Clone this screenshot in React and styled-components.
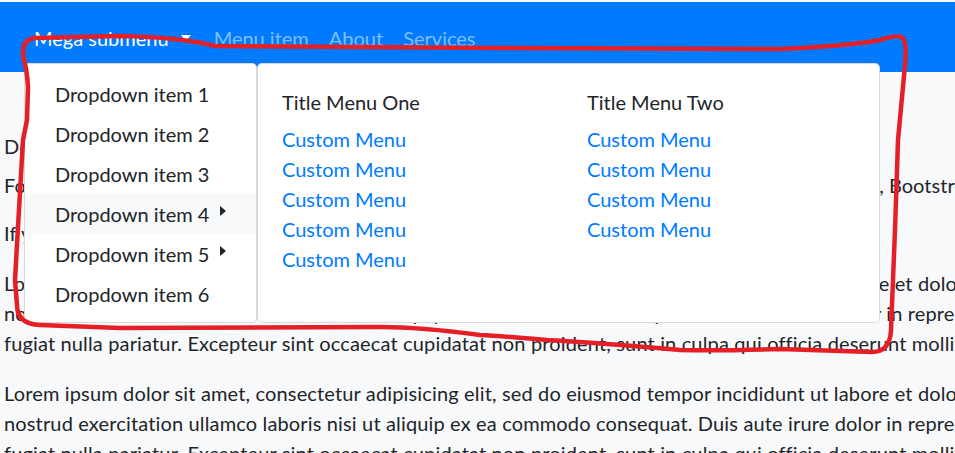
import React from "react";
import styled, { createGlobalStyle } from "styled-components";

const GlobalStyle = createGlobalStyle`
  html, body {
    margin: 0;
    padding: 0;
    background: #f8f9fa;
    overflow: hidden;
  }
  body {
    font-family: "Lato", "Liberation Sans", sans-serif;
    font-size: 20px;
    line-height: 30px;
    color: #212529;
  }
  * { box-sizing: border-box; }
`;

const Page = styled.div`
  position: relative;
  width: 955px;
  height: 453px;
  padding-top: 2px;
  overflow: hidden;
`;

const Navbar = styled.nav`
  position: relative;
  height: 70px;
  background: #007bff;
  display: flex;
  align-items: center;
  padding: 2px 0 0 24px;
`;

const NavLink = styled.a`
  display: flex;
  align-items: center;
  padding: 0 10px;
  color: ${(p) => (p.$active ? "#ffffff" : "rgba(255, 255, 255, 0.5)")};
  text-decoration: none;
  white-space: nowrap;
`;

const DownCaret = styled.span`
  display: inline-block;
  width: 0;
  height: 0;
  margin: 0 3px 0 12px;
  border-top: 6px solid #ffffff;
  border-left: 5.5px solid transparent;
  border-right: 5.5px solid transparent;
`;

const Dropdown = styled.div`
  position: absolute;
  top: 61px;
  left: 24px;
  display: flex;
  z-index: 5;
`;

const ItemMenu = styled.ul`
  list-style: none;
  margin: 0;
  width: 233px;
  height: 260px;
  padding: 9px 0;
  background: #ffffff;
  border: 1px solid rgba(0, 0, 0, 0.15);
  border-radius: 5px;
`;

const Item = styled.li`
  display: flex;
  align-items: center;
  height: 40px;
  padding: 2px 30px 0;
  white-space: nowrap;
  color: #212529;
  background: ${(p) => (p.$hover ? "#f8f9fa" : "transparent")};
`;

const RightCaret = styled.span`
  display: inline-block;
  width: 0;
  height: 0;
  margin: 0 0 7px 11px;
  border-left: 6px solid #212529;
  border-top: 5px solid transparent;
  border-bottom: 5px solid transparent;
`;

const MegaPanel = styled.div`
  width: 623px;
  height: 260px;
  padding: 23px 24px;
  background: #ffffff;
  border: 1px solid rgba(0, 0, 0, 0.15);
  border-radius: 5px;
  display: grid;
  grid-template-columns: 305px 305px;
  align-items: start;
`;

const Column = styled.div`
  display: flex;
  flex-direction: column;
`;

const ColumnTitle = styled.h6`
  margin: 0 0 7px;
  font-size: 20px;
  font-weight: 400;
  line-height: 30px;
  color: #212529;
`;

const MenuLink = styled.a`
  color: #007bff;
  text-decoration: none;
  line-height: 30px;
  white-space: nowrap;
`;

const Content = styled.main`
  padding: 59px 0 0 4px;
`;

const Paragraph = styled.p`
  margin: 0 0 ${(p) => p.$gap}px;
  letter-spacing: ${(p) => (p.$tight ? "0.05px" : "0.15px")};
`;

const Line = styled.span`
  display: block;
  white-space: nowrap;
`;

const Annotation = styled.svg`
  position: absolute;
  top: 0;
  left: 0;
  width: 955px;
  height: 453px;
  pointer-events: none;
  z-index: 10;
`;

const items = [
  { label: "Dropdown item 1" },
  { label: "Dropdown item 2" },
  { label: "Dropdown item 3" },
  { label: "Dropdown item 4", sub: true, hover: true },
  { label: "Dropdown item 5", sub: true },
  { label: "Dropdown item 6" },
];

const columns = [
  { title: "Title Menu One", count: 5 },
  { title: "Title Menu Two", count: 4 },
];

const lorem = [
  "Lorem ipsum dolor sit amet, consectetur adipisicing elit, sed do eiusmod tempor incididunt ut labore et dolore magna aliqua. Ut enim ad minim veniam, quis",
  "nostrud exercitation ullamco laboris nisi ut aliquip ex ea commodo consequat. Duis aute irure dolor in reprehenderit in voluptate velit esse cillum dolore eu",
  "fugiat nulla pariatur. Excepteur sint occaecat cupidatat non proident, sunt in culpa qui officia deserunt mollit anim id est laborum.",
];

export default function App() {
  return (
    <Page>
      <GlobalStyle />
      <Navbar>
        <NavLink $active href="#">
          Mega submenu
          <DownCaret />
        </NavLink>
        <NavLink href="#">Menu item</NavLink>
        <NavLink href="#">About</NavLink>
        <NavLink href="#">Services</NavLink>
        <Dropdown>
          <ItemMenu>
            {items.map((it) => (
              <Item key={it.label} $hover={it.hover}>
                {it.label}
                {it.sub && <RightCaret />}
              </Item>
            ))}
          </ItemMenu>
          <MegaPanel>
            {columns.map((col) => (
              <Column key={col.title}>
                <ColumnTitle>{col.title}</ColumnTitle>
                {Array.from({ length: col.count }).map((_, i) => (
                  <MenuLink key={i} href="#">
                    Custom Menu
                  </MenuLink>
                ))}
              </Column>
            ))}
          </MegaPanel>
        </Dropdown>
      </Navbar>
      <Content>
        <Paragraph $gap={9}>
          <Line>Demo page: Mega submenu in navbar</Line>
        </Paragraph>
        <Paragraph $gap={18} $tight>
          <Line>
            For this demo page you should connect to the internet to receive files from CDN like Bootstrap CSS, Bootstrap JS
          </Line>
        </Paragraph>
        <Paragraph $gap={20}>
          <Line>If you like it, please share this page.</Line>
        </Paragraph>
        <Paragraph $gap={20}>
          {lorem.map((l) => (
            <Line key={l}>{l}</Line>
          ))}
        </Paragraph>
        <Paragraph $gap={20}>
          {lorem.map((l) => (
            <Line key={l}>{l}</Line>
          ))}
        </Paragraph>
      </Content>
      <Annotation viewBox="0 0 955 453">
        <path
          d="M 23 140 L 27 120 L 28 87 Q 27 70 24 60 Q 20 40 34 38 L 120 36 Q 180 37 215 46 L 500 48 L 780 49 Q 850 46 880 40 Q 898 34 903 38 Q 907 44 905 65 L 898 140 L 895 230 L 891 330 Q 890 352 872 352 L 780 349 Q 720 351 680 350 Q 600 343 547 340 Q 500 336 480 335 Q 420 327 380 327 L 120 328 L 40 325 Q 17 324 17 305 L 15 280 L 18 227 L 23 140"
          fill="none"
          stroke="#e41f26"
          strokeWidth="4.5"
          strokeLinecap="round"
          strokeLinejoin="round"
        />
      </Annotation>
    </Page>
  );
}
